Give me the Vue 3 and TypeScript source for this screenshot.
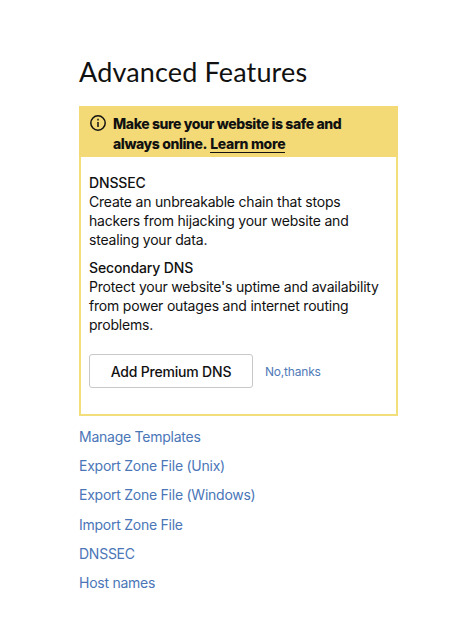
<script setup lang="ts">
const links: string[] = [
  'Manage Templates',
  'Export Zone File (Unix)',
  'Export Zone File (Windows)',
  'Import Zone File',
  'DNSSEC',
  'Host names',
]
</script>

<template>
  <main class="page">
    <h1 class="title">Advanced Features</h1>
    <section class="card">
      <div class="banner">
        <svg class="info" width="18" height="18" viewBox="0 0 18 18" fill="none" stroke="#111" stroke-width="1.5">
          <circle cx="9" cy="9" r="7.2" />
          <path d="M9 8v5" />
          <path d="M9 4.8v1.6" />
        </svg>
        <p class="banner-text">Make sure your website is safe and always online. <a class="learn">Learn more</a></p>
      </div>
      <div class="body">
        <div class="feature">
          <h2 class="feature-title">DNSSEC</h2>
          <p class="feature-text">Create an unbreakable chain that stops hackers from hijacking your website and stealing your data.</p>
        </div>
        <div class="feature">
          <h2 class="feature-title">Secondary DNS</h2>
          <p class="feature-text">Protect your website's uptime and availability from power outages and internet routing problems.</p>
        </div>
        <div class="actions">
          <button class="add" type="button">Add Premium DNS</button>
          <a class="thanks">No,thanks</a>
        </div>
      </div>
    </section>
    <nav class="links">
      <a v-for="link in links" :key="link" class="link">{{ link }}</a>
    </nav>
  </main>
</template>

<style scoped>
.page {
  box-sizing: border-box;
  width: 474px;
  height: 641px;
  padding: 55px 76px 0 79px;
  font-family: "Inter", "Noto Sans", sans-serif;
  color: #111;
  background: #fff;
  overflow: hidden;
}
.title {
  margin: 0 0 17px;
  font-family: "Lato", sans-serif;
  font-size: 27px;
  line-height: 34px;
  font-weight: 400;
  letter-spacing: 0.15px;
}
.card {
  border: 2px solid #f3de7c;
  border-top: 0;
}
.banner {
  display: flex;
  gap: 6px;
  margin: 0 -2px;
  padding: 8px 9px 4px 10px;
  background: #f3da76;
}
.info {
  flex: none;
  margin-top: 0;
}
.banner-text {
  margin: 0;
  font-size: 14px;
  line-height: 19.5px;
  font-weight: 800;
  letter-spacing: -0.4px;
}
.learn {
  display: inline-block;
  margin-left: 1px;
  line-height: 17px;
  letter-spacing: -0.3px;
  border-bottom: 1.5px solid #111;
}
.body {
  padding: 16px 8px 26px;
}
.feature {
  margin-bottom: 9px;
}
.feature-title {
  margin: 0;
  font-size: 14px;
  line-height: 19px;
  font-weight: 500;
  letter-spacing: -0.15px;
}
.feature-text {
  margin: 0;
  font-size: 14px;
  line-height: 19px;
  font-weight: 400;
  letter-spacing: -0.2px;
}
.actions {
  display: flex;
  align-items: center;
  gap: 12px;
  margin-top: 20px;
}
.add {
  width: 164px;
  height: 34px;
  border: 1px solid #c6c8ca;
  border-radius: 3px;
  background: #fff;
  font-family: inherit;
  font-size: 14px;
  font-weight: 500;
  letter-spacing: -0.2px;
  color: #111;
}
.thanks {
  font-size: 12px;
  letter-spacing: -0.2px;
  color: #4f7ab8;
}
.links {
  display: flex;
  flex-direction: column;
  gap: 9.2px;
  margin-top: 11px;
}
.link {
  font-size: 14px;
  line-height: 20px;
  letter-spacing: -0.25px;
  color: #4a76b8;
}
</style>
